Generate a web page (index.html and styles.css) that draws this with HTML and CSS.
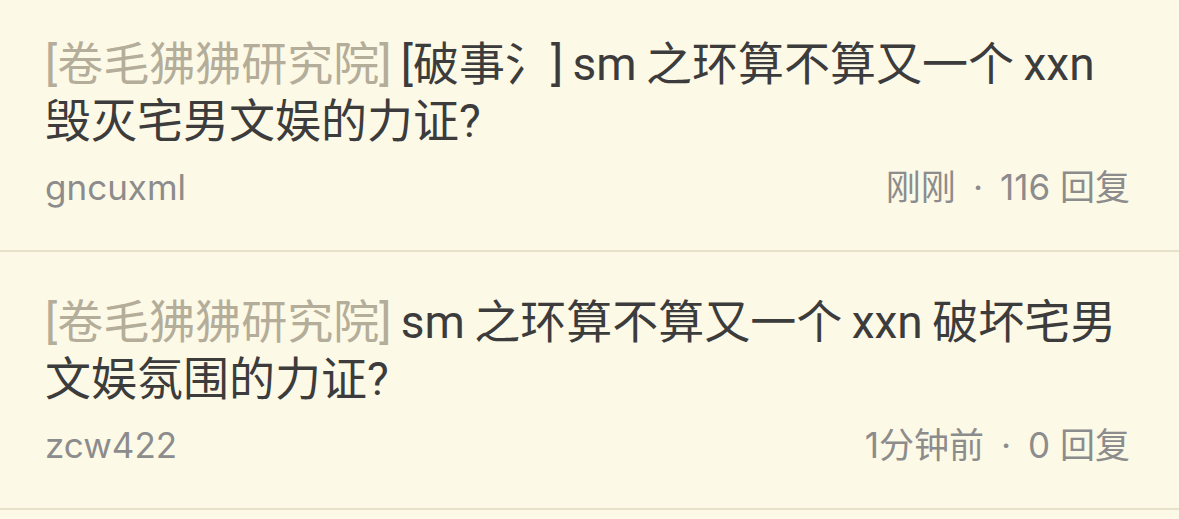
FILE: index.html
```html
<!DOCTYPE html>
<html lang="zh-CN">
<head>
  <meta charset="UTF-8">
  <meta name="viewport" content="width=device-width, initial-scale=1.0">
  <title>帖子列表</title>
  <link rel="stylesheet" href="styles.css">
</head>
<body>

  <ul class="topics">
    <li class="topic">
      <p class="title"><span class="node">[卷毛狒狒研究院]</span> [破事氵] sm 之环算不算又一个 xxn 毁灭宅男文娱的力证?</p>
      <div class="meta">
        <span class="author">gncuxml</span>
        <span class="info">刚刚<span class="dot">·</span>116 回复</span>
      </div>
    </li>
    <li class="topic">
      <p class="title"><span class="node">[卷毛狒狒研究院]</span> sm 之环算不算又一个 xxn 破坏宅男文娱氛围的力证?</p>
      <div class="meta">
        <span class="author">zcw422</span>
        <span class="info">1分钟前<span class="dot">·</span>0 回复</span>
      </div>
    </li>
  </ul>

</body>
</html>
```

FILE: styles.css
```css
body {
  margin: 0;
  background: #fdf9e7;
  font-family: Inter, "Noto Sans CJK SC", sans-serif;
  overflow: hidden;
}
.topics {
  list-style: none;
  margin: -6px 0 0;
  padding: 0;
}
.topic {
  padding: 42px 49px 40px 45px;
  border-bottom: 2px solid #e8e1c9;
}
.title {
  margin: 0;
  font-family: Roboto, "Noto Sans CJK SC", sans-serif;
  font-size: 46px;
  line-height: 57px;
  word-spacing: -2px;
  color: #3c3c3c;
}
.node { color: #b4ad99; }
.meta {
  display: flex;
  justify-content: space-between;
  margin-top: 15px;
  font-size: 35px;
  line-height: 45px;
  color: #8c8c8c;
}
.dot { margin: 0 17px; }
```
